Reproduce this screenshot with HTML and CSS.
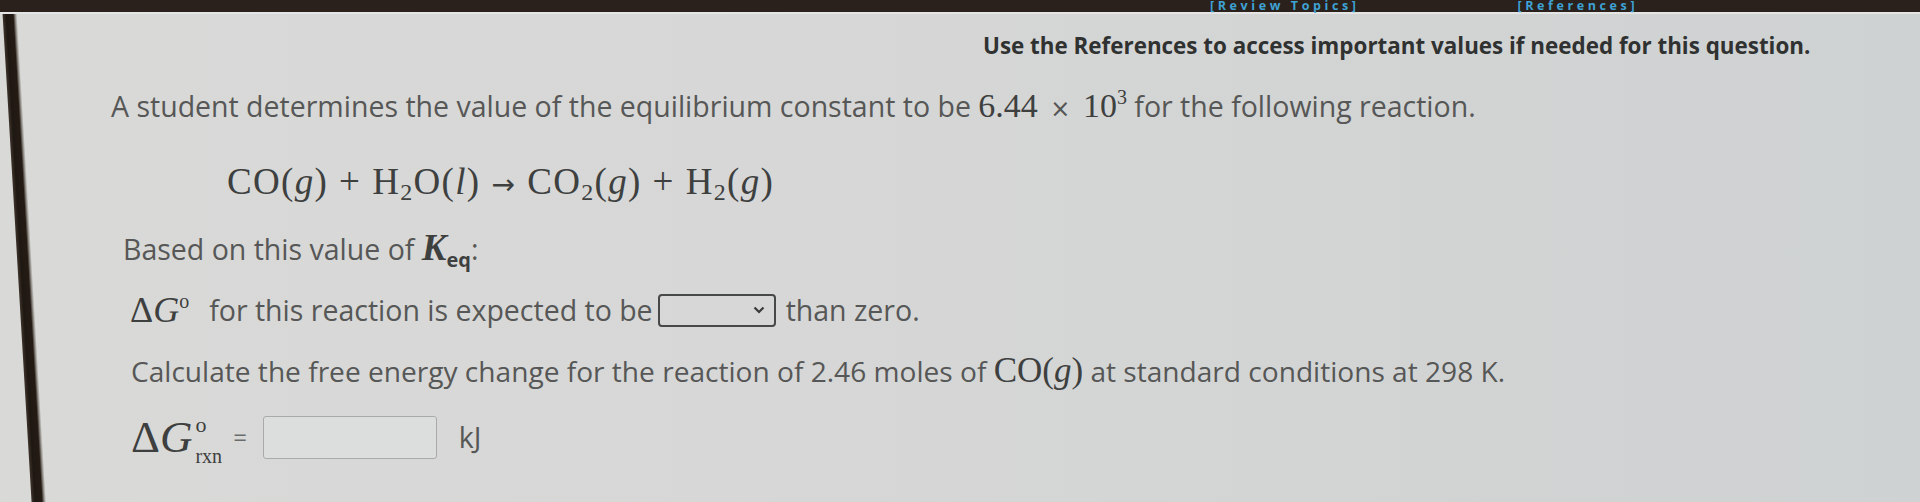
FILE: index.html
```html
<!DOCTYPE html>
<html lang="en">
<head>
<meta charset="utf-8">
<title>Question</title>
<link rel="stylesheet" href="styles.css">
</head>
<body>
<div class="screen">
  <div class="topbar">
    <span class="toplink review">[Review Topics]</span>
    <span class="toplink refs-link">[References]</span>
  </div>
  <div class="panel">
    <p class="refs">Use the References to access important values if needed for this question.</p>
    <p class="line q">A student determines the value of the equilibrium constant to be <span class="m num">6.44 <span class="times">×</span> 10<sup class="exp">3</sup></span> for the following reaction.</p>
    <p class="eq m">CO(<i>g</i>)<span class="op">+</span>H<sub>2</sub>O(<i>l</i>)<span class="op arrow">→</span>CO<sub>2</sub>(<i>g</i>)<span class="op">+</span>H<sub>2</sub>(<i>g</i>)</p>
    <p class="line based">Based on this value of <span class="keq"><b class="kk">K</b><sub class="eqsub">eq</sub></span>:</p>
    <p class="line dg"><span class="m dgsym">Δ<i>G</i><sup class="deg">o</sup></span> for this reaction is expected to be <span class="select"><svg class="chev" viewBox="0 0 12 8" width="12" height="8"><polyline points="1.5,1.5 6,6 10.5,1.5" fill="none" stroke="#3a3a3a" stroke-width="2.2"/></svg></span> than zero.</p>
    <p class="line calc">Calculate the free energy change for the reaction of 2.46 moles of <span class="m co">CO(<i>g</i>)</span> at standard conditions at 298 K.</p>
    <div class="line rxn">
      <span class="m rxnsym">Δ<i>G</i><span class="scripts"><span class="sup">o</span><span class="sub">rxn</span></span></span>
      <span class="eqsign">=</span>
      <span class="input"></span>
      <span class="unit">kJ</span>
    </div>
  </div>
</div>
</body>
</html>
```

FILE: styles.css
```css
html, body {
  margin: 0;
  padding: 0;
}
body {
  width: 1920px;
  height: 502px;
  overflow: hidden;
  background: #d6d7d6;
  font-family: "Open Sans", "Liberation Sans", sans-serif;
}
.screen {
  width: 1920px;
  height: 502px;
  display: flex;
  flex-direction: column;
  background:
    linear-gradient(86.6deg, transparent 0, transparent 31px, #3a3028 32px, #1f1812 35px, #241b14 42px, rgba(60,50,40,0.5) 44px, transparent 46px),
    linear-gradient(90deg, #d9dad8 0%, #d6d7d6 40%, #d2d4d4 75%, #cfd2d2 100%);
}
.topbar {
  height: 12px;
  flex: 0 0 12px;
  background: #2a211c;
  display: flex;
  border-bottom: 2px solid #e4e5e4;
}
.toplink {
  font-family: "Open Sans", sans-serif;
  font-weight: 700;
  font-size: 12.5px;
  line-height: 12px;
  letter-spacing: 3.6px;
  color: #3fa2d4;
  white-space: nowrap;
}
.review { margin-left: 1210px; }
.refs-link { margin-left: 158px; }
.panel {
  flex: 1;
  display: flex;
  flex-direction: column;
  color: #565756;
}
p { margin: 0; }
.refs {
  margin-top: 17px;
  font-weight: 700;
  font-size: 22.4px;
  line-height: 30px;
  height: 30px;
  color: #303131;
  padding-left: 983px;
  white-space: nowrap;
}
.line {
  font-size: 28.5px;
  line-height: 40px;
  height: 40px;
  white-space: nowrap;
}
.m {
  font-family: "Liberation Serif", "DejaVu Serif", serif;
  color: #3e3f3f;
}
.m i { font-style: italic; }
.q {
  margin-top: 25px;
  padding-left: 111px;
}
.num { font-size: 34px; }
.times { font-family: "DejaVu Sans", sans-serif; font-size: 24px; color: #555; margin: 0 4px; }
.exp { font-size: 20px; vertical-align: 13px; line-height: 0; }
.eq {
  margin-top: 34px;
  padding-left: 227px;
  font-size: 37px;
  letter-spacing: 1.3px;
  line-height: 44px;
  height: 44px;
  white-space: nowrap;
}
.op { margin: 0 11px; }
.eq sub {
  font-size: 24px;
  vertical-align: -6px;
  line-height: 0;
}
.arrow { font-family: "DejaVu Sans", sans-serif; font-size: 28px; }
.based {
  margin-top: 24px;
  padding-left: 123px;
}
.keq { font-family: "Liberation Serif", serif; color: #3e3f3f; }
.kk { font-style: italic; font-weight: 700; font-size: 37px; }
.keq .eqsub {
  font-family: "Open Sans", sans-serif;
  font-weight: 700;
  font-size: 20px;
  vertical-align: -7px;
  line-height: 0;
}
.dg {
  margin-top: 22px;
  padding-left: 130px;
  display: flex;
  align-items: center;
}
.dgsym { font-size: 36px; margin-right: 20px; }
.deg { font-size: 20px; vertical-align: 14px; line-height: 0; }
.select {
  display: inline-flex;
  align-items: center;
  justify-content: flex-end;
  box-sizing: border-box;
  width: 118px;
  height: 33px;
  margin: 0 10px 0 5px;
  border: 2px solid #474848;
  border-radius: 4px;
  padding-right: 9px;
}
.calc {
  margin-top: 21px;
  padding-left: 131px;
  font-size: 28.1px;
}
.co { font-size: 35px; }
.rxn {
  margin-top: 24px;
  padding-left: 131px;
  height: 44px;
  display: flex;
  align-items: center;
}
.rxnsym {
  font-size: 45px;
  display: inline-flex;
  align-items: flex-start;
  line-height: 44px;
  height: 44px;
}
.scripts {
  display: inline-flex;
  flex-direction: column;
  align-items: flex-start;
  margin-left: 3px;
}
.scripts .sup { font-size: 22px; line-height: 20px; margin-top: 0; }
.scripts .sub { font-size: 20px; line-height: 16px; margin-top: 13px; }
.eqsign {
  font-size: 24px;
  margin-left: 11px;
  margin-right: 16px;
  color: #6a6b6b;
}
.input {
  box-sizing: border-box;
  width: 174px;
  height: 43px;
  border: 1.5px solid #a9abab;
  border-radius: 3px;
  background: #dcdddd;
}
.unit {
  margin-left: 22px;
  color: #565756;
}
```
